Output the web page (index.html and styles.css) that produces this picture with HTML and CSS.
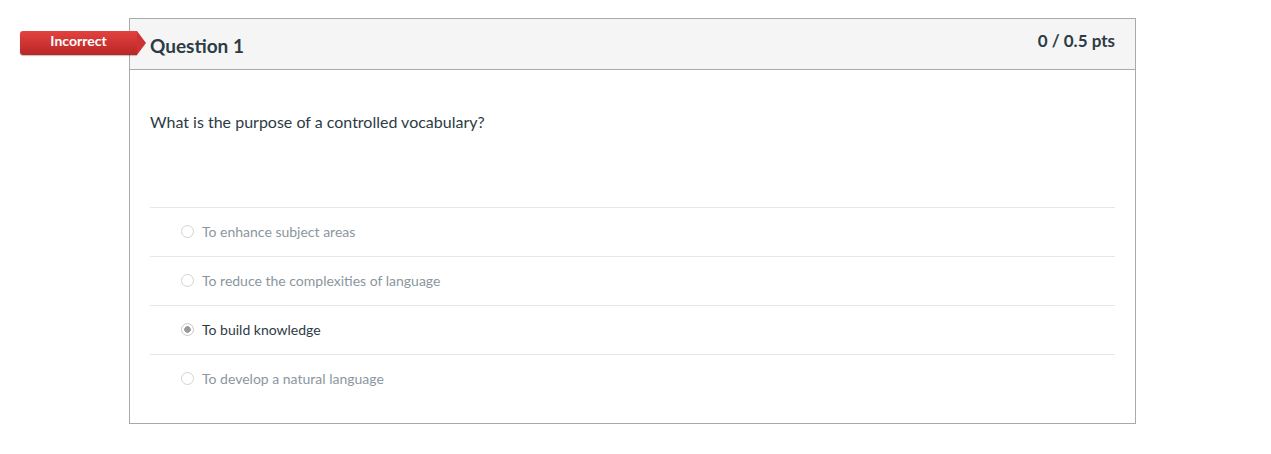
FILE: index.html
```html
<!DOCTYPE html>
<html lang="en">

<head>
    <meta charset="UTF-8">
    <meta name="viewport" content="width=device-width, initial-scale=1.0">
    <title>Quiz Results</title>
    <link rel="stylesheet" href="styles.css">
</head>

<body>
    <div class="page">
        <div class="question">
            <span class="answer-badge">Incorrect</span>

            <div class="question-header">
                <h2 class="question-title">Question 1</h2>
                <span class="question-points">0 / 0.5 pts</span>
            </div>

            <div class="question-body">
                <p class="question-text">What is the purpose of a controlled vocabulary?</p>

                <ul class="answers">
                    <li class="answer">
                        <span class="radio"></span>
                        <span>To enhance subject areas</span>
                    </li>
                    <li class="answer">
                        <span class="radio"></span>
                        <span>To reduce the complexities of language</span>
                    </li>
                    <li class="answer selected">
                        <span class="radio"></span>
                        <span>To build knowledge</span>
                    </li>
                    <li class="answer">
                        <span class="radio"></span>
                        <span>To develop a natural language</span>
                    </li>
                </ul>
            </div>
        </div>
    </div>
</body>

</html>
```

FILE: styles.css
```css
body {
    margin: 0;
    background-color: #fff;
    font-family: 'Lato', 'Liberation Sans', sans-serif;
    color: #2d3b45;
}

.page {
    padding: 18px 0 0 129px;
}

.question {
    position: relative;
    width: 1005px;
    border: 1px solid #aaaaaa;
}

.answer-badge {
    position: absolute;
    top: 12px;
    left: -110px;
    width: 117px;
    height: 24px;
    line-height: 20px;
    box-sizing: border-box;
    text-align: center;
    color: #fff;
    font-size: 14px;
    font-weight: bold;
    background: linear-gradient(#e3423f, #b92626);
    border-radius: 3px 0 0 3px;
    box-shadow: 0 1px 1px rgba(0, 0, 0, 0.25);
}

.answer-badge::after {
    content: '';
    position: absolute;
    top: 0;
    right: -9px;
    border-top: 12px solid transparent;
    border-bottom: 12px solid transparent;
    border-left: 9px solid #cd3332;
}

.question-header {
    display: flex;
    justify-content: space-between;
    align-items: flex-start;
    height: 50px;
    padding: 0 20px;
    background-color: #f5f5f5;
    border-bottom: 1px solid #aaaaaa;
}

.question-title {
    margin: 0;
    padding-top: 15px;
    font-size: 19px;
    font-weight: bold;
    line-height: 24px;
}

.question-points {
    padding-top: 11px;
    font-size: 17px;
    font-weight: bold;
    line-height: 22px;
}

.question-body {
    padding: 40px 20px 20px;
}

.question-text {
    margin: 0 0 73px;
    font-size: 16px;
    line-height: 24px;
}

.answers {
    list-style-type: none;
    margin: 0;
    padding: 0;
}

.answer {
    display: flex;
    align-items: center;
    gap: 8px;
    height: 46px;
    padding: 0 0 2px 31px;
    border-top: 1px solid #e6e6e6;
    font-size: 14px;
    color: #8b969e;
}

.radio {
    width: 11px;
    height: 11px;
    border: 1px solid #d4d4d4;
    border-radius: 50%;
    background-color: #fff;
}

.answer.selected {
    color: #2d3b45;
}

.answer.selected .radio {
    border-color: #c9c9c9;
    background: radial-gradient(circle, #9a9a9a 0 3px, #fff 3.5px);
}
```
